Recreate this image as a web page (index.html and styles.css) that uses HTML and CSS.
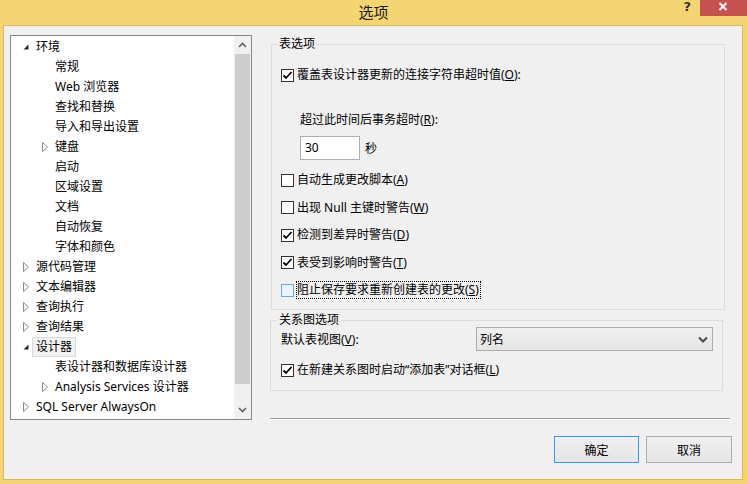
FILE: index.html
```html
<!DOCTYPE html>
<html>
<head>
<meta charset="utf-8">
<title>选项</title>
<link rel="stylesheet" href="styles.css">
</head>
<body>
<div class="window">
  <div class="titlebar">
    <div></div>
    <div class="title">选项</div>
    <div class="controls">
      <span class="help">?</span>
      <span class="close"><svg width="47" height="16" viewBox="0 0 47 16"><path d="M19.5 3 L26.5 10 M26.5 3 L19.5 10" stroke="#fff" stroke-width="2" fill="none"/></svg></span>
    </div>
  </div>
  <div class="frame">
    <div class="main">
      <div class="tree">
        <ul class="items">
          <li class="row"><span class="exp"><svg width="6" height="6" viewBox="0 0 6 6"><path d="M5.5 0.5 L5.5 5.5 L0.5 5.5 Z" fill="#262626"/></svg></span><span class="lbl">环境</span></li>
          <li class="row l1"><span class="exp"></span><span class="lbl">常规</span></li>
          <li class="row l1"><span class="exp"></span><span class="lbl">Web 浏览器</span></li>
          <li class="row l1"><span class="exp"></span><span class="lbl">查找和替换</span></li>
          <li class="row l1"><span class="exp"></span><span class="lbl">导入和导出设置</span></li>
          <li class="row l1"><span class="exp"><svg width="7" height="10" viewBox="0 0 7 10"><path d="M0.5 0.5 L5.5 5 L0.5 9.5 Z" fill="none" stroke="#8a8a8a" stroke-width="1"/></svg></span><span class="lbl">键盘</span></li>
          <li class="row l1"><span class="exp"></span><span class="lbl">启动</span></li>
          <li class="row l1"><span class="exp"></span><span class="lbl">区域设置</span></li>
          <li class="row l1"><span class="exp"></span><span class="lbl">文档</span></li>
          <li class="row l1"><span class="exp"></span><span class="lbl">自动恢复</span></li>
          <li class="row l1"><span class="exp"></span><span class="lbl">字体和颜色</span></li>
          <li class="row"><span class="exp"><svg width="7" height="10" viewBox="0 0 7 10"><path d="M0.5 0.5 L5.5 5 L0.5 9.5 Z" fill="none" stroke="#8a8a8a" stroke-width="1"/></svg></span><span class="lbl">源代码管理</span></li>
          <li class="row"><span class="exp"><svg width="7" height="10" viewBox="0 0 7 10"><path d="M0.5 0.5 L5.5 5 L0.5 9.5 Z" fill="none" stroke="#8a8a8a" stroke-width="1"/></svg></span><span class="lbl">文本编辑器</span></li>
          <li class="row"><span class="exp"><svg width="7" height="10" viewBox="0 0 7 10"><path d="M0.5 0.5 L5.5 5 L0.5 9.5 Z" fill="none" stroke="#8a8a8a" stroke-width="1"/></svg></span><span class="lbl">查询执行</span></li>
          <li class="row"><span class="exp"><svg width="7" height="10" viewBox="0 0 7 10"><path d="M0.5 0.5 L5.5 5 L0.5 9.5 Z" fill="none" stroke="#8a8a8a" stroke-width="1"/></svg></span><span class="lbl">查询结果</span></li>
          <li class="row"><span class="exp"><svg width="6" height="6" viewBox="0 0 6 6"><path d="M5.5 0.5 L5.5 5.5 L0.5 5.5 Z" fill="#262626"/></svg></span><span class="lbl selected">设计器</span></li>
          <li class="row l1"><span class="exp"></span><span class="lbl">表设计器和数据库设计器</span></li>
          <li class="row l1"><span class="exp"><svg width="7" height="10" viewBox="0 0 7 10"><path d="M0.5 0.5 L5.5 5 L0.5 9.5 Z" fill="none" stroke="#8a8a8a" stroke-width="1"/></svg></span><span class="lbl">Analysis Services 设计器</span></li>
          <li class="row"><span class="exp"><svg width="7" height="10" viewBox="0 0 7 10"><path d="M0.5 0.5 L5.5 5 L0.5 9.5 Z" fill="none" stroke="#8a8a8a" stroke-width="1"/></svg></span><span class="lbl">SQL Server AlwaysOn</span></li>
        </ul>
        <div class="vscroll">
          <div class="sbtn"><svg width="9" height="6" viewBox="0 0 9 6"><path d="M1 5 L4.5 1.5 L8 5" fill="none" stroke="#606060" stroke-width="1.6"/></svg></div>
          <div class="thumb"></div>
          <div class="track"></div>
          <div class="sbtn"><svg width="9" height="6" viewBox="0 0 9 6"><path d="M1 1 L4.5 4.5 L8 1" fill="none" stroke="#606060" stroke-width="1.6"/></svg></div>
        </div>
      </div>
      <div class="panel">
        <fieldset class="group g1">
          <legend>表选项</legend>
          <div class="crow first"><span class="cb"><svg width="11" height="11" viewBox="0 0 11 11"><path d="M1.5 5.5 L4 8 L9.5 2" fill="none" stroke="#000" stroke-width="1.8"/></svg></span><span class="ct">覆盖表设计器更新的连接字符串超时值(<u>O</u>):</span></div>
          <div class="sublabel">超过此时间后事务超时(<u>R</u>):</div>
          <div class="inrow"><span class="tbox">30</span><span class="unit">秒</span></div>
          <div class="crow gap1"><span class="cb"></span><span class="ct">自动生成更改脚本(<u>A</u>)</span></div>
          <div class="crow"><span class="cb"></span><span class="ct">出现 Null 主键时警告(<u>W</u>)</span></div>
          <div class="crow"><span class="cb"><svg width="11" height="11" viewBox="0 0 11 11"><path d="M1.5 5.5 L4 8 L9.5 2" fill="none" stroke="#000" stroke-width="1.8"/></svg></span><span class="ct">检测到差异时警告(<u>D</u>)</span></div>
          <div class="crow"><span class="cb"><svg width="11" height="11" viewBox="0 0 11 11"><path d="M1.5 5.5 L4 8 L9.5 2" fill="none" stroke="#000" stroke-width="1.8"/></svg></span><span class="ct">表受到影响时警告(<u>T</u>)</span></div>
          <div class="crow"><span class="cb hover"></span><span class="ct focus">阻止保存要求重新创建表的更改(<u>S</u>)</span></div>
        </fieldset>
        <fieldset class="group g2">
          <legend>关系图选项</legend>
          <div class="selrow"><span>默认表视图(<u>V</u>):</span><span class="combo"><span>列名</span><svg width="10" height="7" viewBox="0 0 10 7"><path d="M1 1.5 L5 5.5 L9 1.5" fill="none" stroke="#4a4a4a" stroke-width="2"/></svg></span></div>
          <div class="crow gap2"><span class="cb"><svg width="11" height="11" viewBox="0 0 11 11"><path d="M1.5 5.5 L4 8 L9.5 2" fill="none" stroke="#000" stroke-width="1.8"/></svg></span><span class="ct">在新建关系图时启动“添加表”对话框(<u>L</u>)</span></div>
        </fieldset>
        <div class="sep"></div>
      </div>
    </div>
    <div class="buttons">
      <button class="btn default">确定</button>
      <button class="btn cancel">取消</button>
    </div>
  </div>
</div>
</body>
</html>
```
FILE: styles.css
```css
* { box-sizing: border-box; }
html, body { margin: 0; padding: 0; }
body {
  width: 747px;
  height: 484px;
  overflow: hidden;
  font-family: "Segoe UI", "Noto Sans", "Noto Sans CJK SC", sans-serif;
  font-size: 12px;
  color: #000;
}
.window {
  width: 747px;
  height: 484px;
  background: #f4d571;
  display: flex;
  flex-direction: column;
}
.titlebar {
  height: 25px;
  display: grid;
  grid-template-columns: 1fr auto 1fr;
}
.title {
  font-family: "Noto Sans CJK SC", sans-serif;
  font-size: 15px;
  line-height: 24px;
  color: #1a1a1a;
}
.controls {
  display: flex;
  justify-content: flex-end;
  align-items: flex-start;
}
.help {
  font-family: "DejaVu Sans", sans-serif;
  font-weight: bold;
  font-size: 13px;
  line-height: 14px;
  color: #333;
  margin-right: 9px;
}
.close {
  width: 47px;
  height: 16px;
  background: #c75050;
  display: block;
}
.close svg { display: block; }
.frame {
  flex: 1;
  margin: 0 4px 4px 3px;
  background: #f0f0f0;
  border: 1px solid #d8b95c;
  padding: 9px 10px 0 6px;
}
.main {
  display: flex;
  gap: 18px;
  height: 385px;
}
.tree {
  width: 242px;
  height: 385px;
  border: 1px solid #828790;
  background: #fff;
  display: flex;
}
.items {
  flex: 1;
  list-style: none;
  margin: 0;
  padding: 1px 0 0 0;
}
.row {
  height: 20px;
  display: flex;
  align-items: center;
  padding-left: 9px;
  white-space: nowrap;
}
.row.l1 { padding-left: 28px; }
.exp {
  width: 16px;
  height: 20px;
  display: flex;
  align-items: center;
  padding-left: 3px;
  flex: none;
}
.exp svg { display: block; }
.lbl { line-height: 18px; }
.lbl.selected {
  margin-left: -4px;
  padding: 0 3px;
  border: 1px solid #dadada;
  background: #f2f2f2;
  line-height: 18px;
}
.vscroll {
  width: 17px;
  background: #f0f0f0;
  display: flex;
  flex-direction: column;
}
.sbtn {
  height: 18px;
  display: flex;
  align-items: center;
  justify-content: center;
}
.sbtn svg { display: block; }
.thumb {
  height: 330px;
  margin: 0 1px;
  background: #cdcdcd;
}
.track { flex: 1; }
.panel {
  width: 460px;
  display: flex;
  flex-direction: column;
}
.group {
  margin: 0;
  border: 1px solid #dcdcdc;
  min-width: 0;
}
.group legend {
  padding: 0 2px;
  line-height: 14px;
  font-size: 12px;
}
.g1 {
  margin: 2px 0 0 1px;
  width: 454px;
  padding: 14px 0 9px 9px;
}
.g1 legend { margin-left: -4px; }
.g2 {
  margin-top: 3px;
  width: 453px;
  padding: 0 9px 10px 10px;
}
.g2 legend { margin-left: -4px; }
.crow {
  height: 20px;
  display: flex;
  align-items: center;
  margin-top: 7.5px;
  white-space: nowrap;
}
.crow.first { margin-top: 0; }
.crow.gap1 { margin-top: 10px; }
.crow.gap2 { margin-top: 9px; }
.cb {
  width: 13px;
  height: 13px;
  border: 1px solid #333;
  background: #fff;
  margin-right: 3px;
  flex: none;
}
.cb svg { display: block; }
.cb.hover {
  border-color: #6fa8dc;
  background: #eaf4fd;
  margin-right: 2px;
}
.ct { line-height: 16px; }
.ct.focus {
  border: 1px dotted #000;
  padding: 0 1px 0 0;
}
.sublabel {
  margin: 25px 0 0 19px;
  height: 20px;
  line-height: 20px;
}
.inrow {
  margin: 6px 0 0 19px;
  height: 24px;
  display: flex;
  align-items: center;
}
.tbox {
  width: 60px;
  height: 24px;
  border: 1px solid #abadb3;
  background: #fff;
  padding-left: 4px;
  line-height: 22px;
}
.unit { margin-left: 5px; }
.selrow {
  height: 24px;
  display: flex;
  align-items: center;
  justify-content: space-between;
}
.combo {
  width: 237px;
  height: 24px;
  border: 1px solid #acacac;
  background: linear-gradient(#f0f0f0, #e5e5e5);
  display: flex;
  align-items: center;
  justify-content: space-between;
  padding: 0 4px 0 3px;
}
.combo svg { display: block; }
.sep {
  margin-top: auto;
  height: 2px;
  border-top: 1px solid #a0a0a0;
  border-bottom: 1px solid #ffffff;
}
.buttons {
  margin-top: 16px;
  display: flex;
  justify-content: flex-end;
  gap: 7px;
}
.btn {
  height: 27px;
  font-family: "Noto Sans CJK SC", sans-serif;
  font-size: 12px;
  color: #000;
  background: linear-gradient(#f0f0f0, #e5e5e5);
  border: 1px solid #acacac;
  border-radius: 0;
  padding: 0;
}
.btn.default {
  width: 85px;
  border-color: #3399ff;
}
.btn.cancel { width: 86px; }
```
